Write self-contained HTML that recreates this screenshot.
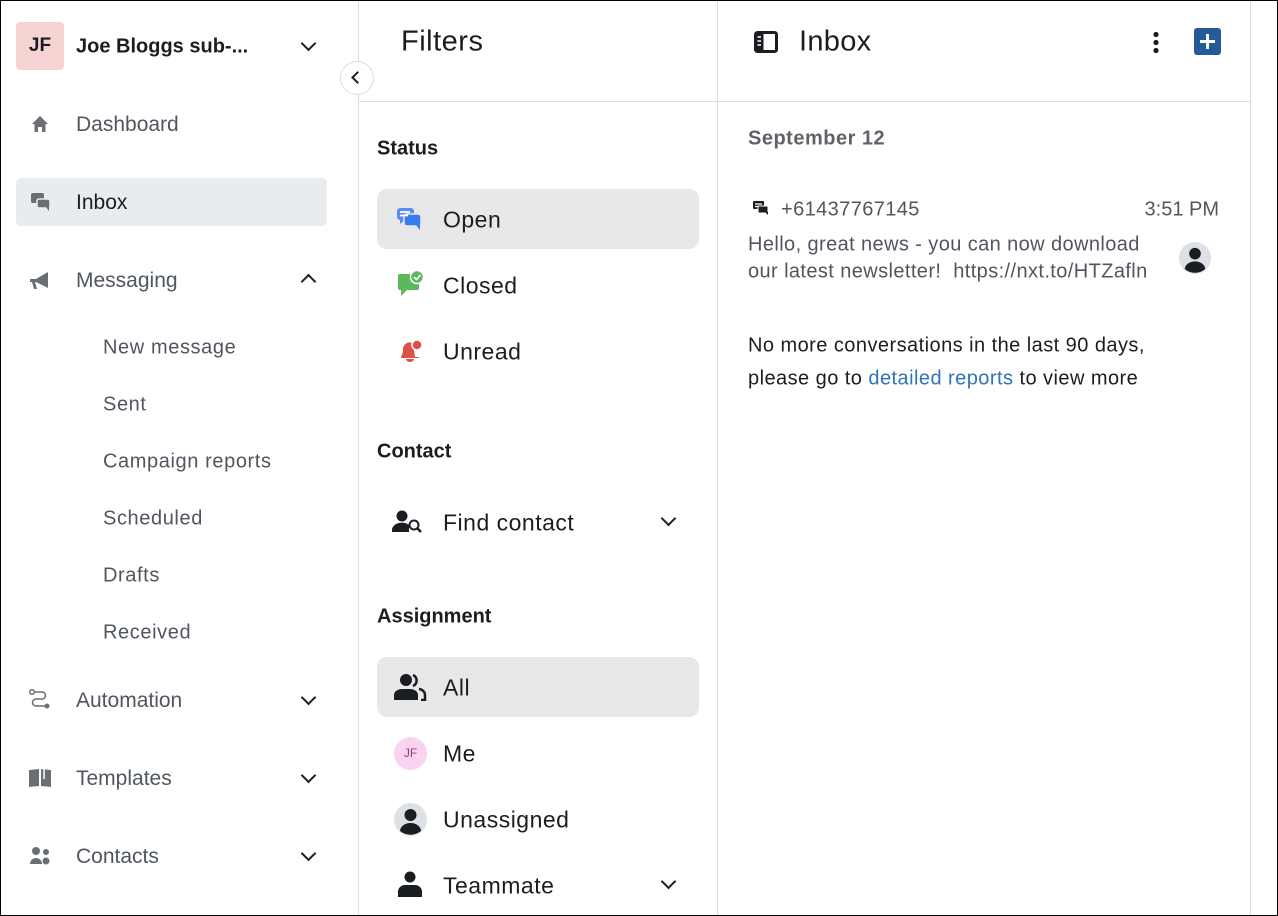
<!DOCTYPE html>
<html><head><meta charset="utf-8"><style>
*{margin:0;padding:0;box-sizing:border-box}
body{width:1278px;height:916px;overflow:hidden;background:#fff;font-family:"Liberation Sans",sans-serif;position:relative}
.frame{position:absolute;left:0;top:0;width:1278px;height:916px;border:1px solid #000;z-index:10;pointer-events:none}
.a{position:absolute;white-space:nowrap}
.vl{position:absolute;top:0;width:1px;height:916px;background:#dcdcdc}
.nav{font-size:21px;color:#505660;transform:translateY(-50%);margin-top:1px}
.sub{font-size:20px;letter-spacing:0.6px;color:#505660;transform:translateY(-50%);left:103px;margin-top:1px}
.f{font-size:23px;letter-spacing:0.5px;color:#1a1d21;transform:translateY(-50%);left:443px;margin-top:1px}
.h{font-size:20px;font-weight:bold;color:#1a1d21;transform:translateY(-50%);left:377px;margin-top:1px}
.ic{position:absolute}
.chev{position:absolute;width:11px;height:11px;border-right:2.5px solid #1a1d21;border-bottom:2.5px solid #1a1d21}
.m{font-size:20px;letter-spacing:0.4px;color:#505660;transform:translateY(-50%);margin-top:1px}
</style></head><body>
<div class="frame"></div>
<div class="vl" style="left:358px"></div>
<div class="vl" style="left:717px"></div>
<div class="vl" style="left:1250px"></div>
<div style="position:absolute;left:359px;top:101px;width:891px;height:1px;background:#dcdcdc"></div>

<!-- sidebar -->
<div class="a" style="left:16px;top:22px;width:48px;height:48px;background:#f6d3d3;border-radius:4px;font-size:19px;font-weight:bold;color:#1a1d21;text-align:center;line-height:48px">JF</div>
<div class="a" style="left:76px;top:47px;transform:translateY(-50%);font-size:20px;font-weight:bold;color:#1a1d21">Joe Bloggs sub-...</div>
<div class="chev" style="left:303px;top:38px;transform:rotate(45deg)"></div>
<div class="a" style="left:340px;top:61px;width:34px;height:34px;border:1px solid #dcdcdc;border-radius:50%;background:#fff;z-index:5"></div>
<div class="chev" style="left:353px;top:73px;width:9px;height:9px;transform:rotate(135deg);z-index:6"></div>

<svg class="ic" style="left:31px;top:115px" width="18" height="18" viewBox="0 0 18 18"><path d="M9 1 L17 9 H14.5 V17 H11 V12 H7 V17 H3.5 V9 H1 Z" fill="#6b6f75"/></svg>
<div class="a nav" style="left:76px;top:124px">Dashboard</div>
<div class="a" style="left:16px;top:178px;width:311px;height:48px;background:#e9ecef;border-radius:5px"></div>
<svg class="ic" style="left:30px;top:192px" width="22" height="20" viewBox="0 0 22 20"><rect x="1" y="1" width="13" height="10" rx="2" fill="#6b6f75"/><rect x="7" y="7" width="13" height="9" rx="2" fill="#6b6f75" stroke="#e9ecef" stroke-width="1.5"/><path d="M16 15 L19 19 L19 15Z" fill="#6b6f75"/></svg>
<div class="a nav" style="left:76px;top:202px;color:#1a1d21">Inbox</div>
<svg class="ic" style="left:28px;top:269px" width="24" height="24" viewBox="0 0 24 24"><path d="M2 10 H8 L20 3 V19 L8 13 H7 L9 20 H6 L4 13 H2Z" fill="#6b6f75"/></svg>
<div class="a nav" style="left:76px;top:280px">Messaging</div>
<div class="chev" style="left:303px;top:276px;transform:rotate(-135deg)"></div>
<div class="a sub" style="top:347px">New message</div>
<div class="a sub" style="top:404px">Sent</div>
<div class="a sub" style="top:461px">Campaign reports</div>
<div class="a sub" style="top:518px">Scheduled</div>
<div class="a sub" style="top:575px">Drafts</div>
<div class="a sub" style="top:632px">Received</div>
<svg class="ic" style="left:28px;top:689px" width="24" height="22" viewBox="0 0 24 22"><circle cx="4" cy="3" r="2.3" fill="none" stroke="#6b6f75" stroke-width="1.5"/><path d="M7 3 H14 A3.5 3.5 0 0 1 14 10 H8 A3.5 3.5 0 0 0 8 17 H17" fill="none" stroke="#6b6f75" stroke-width="1.5"/><circle cx="19" cy="17" r="2.5" fill="#6b6f75"/></svg>
<div class="a nav" style="left:76px;top:700px">Automation</div>
<div class="chev" style="left:303px;top:692px;transform:rotate(45deg)"></div>
<svg class="ic" style="left:28px;top:767px" width="24" height="22" viewBox="0 0 24 22"><path d="M1 3 L11 2 V19 L1 20Z M13 2 L23 3 V20 L13 19Z" fill="#6b6f75"/><path d="M16 1 V12" stroke="#fff" stroke-width="1.5"/></svg>
<div class="a nav" style="left:76px;top:778px">Templates</div>
<div class="chev" style="left:303px;top:770px;transform:rotate(45deg)"></div>
<svg class="ic" style="left:30px;top:846px" width="22" height="20" viewBox="0 0 22 20"><circle cx="6" cy="5" r="4" fill="#6b6f75"/><path d="M0 18 A6 6 0 0 1 12 18Z" fill="#6b6f75"/><circle cx="16" cy="6" r="3" fill="#6b6f75"/><circle cx="16" cy="15" r="3.5" fill="#6b6f75"/></svg>
<div class="a nav" style="left:76px;top:856px">Contacts</div>
<div class="chev" style="left:303px;top:848px;transform:rotate(45deg)"></div>

<!-- filters -->
<div class="a" style="left:401px;top:42px;transform:translateY(-50%);font-size:29px;letter-spacing:0.5px;color:#1a1d21">Filters</div>
<div class="a h" style="top:148px">Status</div>
<div class="a" style="left:377px;top:189px;width:322px;height:60px;background:#e8e8e8;border-radius:10px"></div>
<svg class="ic" style="left:396px;top:207px" width="28" height="26" viewBox="0 0 28 26"><rect x="1" y="1" width="17" height="12" rx="3" fill="#5b8def"/><path d="M4 12 L4 17 L9 13Z" fill="#5b8def"/><rect x="8" y="7" width="17" height="12" rx="3" fill="#3a7cf0" stroke="#e8e8e8" stroke-width="1.5"/><path d="M20 18 L24 23 V17Z" fill="#3a7cf0"/><path d="M4 5 H14 M4 8.5 H12" stroke="#fff" stroke-width="1.8"/></svg>
<div class="a f" style="top:219px">Open</div>
<svg class="ic" style="left:397px;top:270px" width="28" height="28" viewBox="0 0 28 28"><rect x="1" y="4" width="21" height="16" rx="2" fill="#5cb85c"/><path d="M4 19 V26 L11 19Z" fill="#5cb85c"/><circle cx="20" cy="7" r="6.5" fill="#5cb85c" stroke="#fff" stroke-width="1.5"/><path d="M17 7 L19.5 9.5 L23.5 5" stroke="#fff" stroke-width="1.6" fill="none"/></svg>
<div class="a f" style="top:285px">Closed</div>
<svg class="ic" style="left:398px;top:338px" width="26" height="26" viewBox="0 0 26 26"><path d="M3 19 Q5 16 5 11 A7 7 0 0 1 15 5 L17 19Z" fill="#e0504a"/><path d="M3 19 H21 V20 H3Z" fill="#e0504a"/><path d="M8 21 A4 3 0 0 0 16 21Z" fill="#e0504a"/><circle cx="19" cy="7" r="5" fill="#e0504a" stroke="#fff" stroke-width="1.5"/></svg>
<div class="a f" style="top:351px">Unread</div>

<div class="a h" style="top:451px">Contact</div>
<svg class="ic" style="left:392px;top:509px" width="32" height="26" viewBox="0 0 32 26"><circle cx="10" cy="7" r="5.5" fill="#1a1d21"/><path d="M0 23 A10 8 0 0 1 17 16 L17 23Z" fill="#1a1d21"/><circle cx="22" cy="16" r="4.5" fill="#fff" stroke="#1a1d21" stroke-width="2"/><path d="M25 19 L29 23" stroke="#1a1d21" stroke-width="2.5"/></svg>
<div class="a f" style="top:522px">Find contact</div>
<div class="chev" style="left:663px;top:513px;transform:rotate(45deg)"></div>

<div class="a h" style="top:616px">Assignment</div>
<div class="a" style="left:377px;top:657px;width:322px;height:60px;background:#e8e8e8;border-radius:10px"></div>
<svg class="ic" style="left:394px;top:673px" width="34" height="28" viewBox="0 0 34 28"><circle cx="12" cy="7" r="6" fill="#1a1d21"/><path d="M0 27 V22 A8 6 0 0 1 8 16 H16 A8 6 0 0 1 24 22 V27Z" fill="#1a1d21"/><path d="M19 2 A6 6 0 0 1 19 13" stroke="#1a1d21" stroke-width="2.5" fill="none"/><path d="M25 16 A7 6 0 0 1 31 22 V27 H27" stroke="#1a1d21" stroke-width="2.5" fill="none"/></svg>
<div class="a f" style="top:687px">All</div>
<div class="a" style="left:394px;top:737px;width:33px;height:33px;border-radius:50%;background:#f9d3f0;color:#8a3d7a;font-size:12px;text-align:center;line-height:33px">JF</div>
<div class="a f" style="top:753px">Me</div>
<svg class="ic" style="left:394px;top:803px" width="33" height="33" viewBox="0 0 33 33"><circle cx="16.5" cy="16.5" r="16.5" fill="#dde0e4"/><circle cx="16.5" cy="12" r="6" fill="#1a1d21"/><path d="M6 28 A10.5 8 0 0 1 27 28 A16.5 16.5 0 0 1 6 28Z" fill="#1a1d21"/></svg>
<div class="a f" style="top:819px">Unassigned</div>
<svg class="ic" style="left:397px;top:871px" width="26" height="26" viewBox="0 0 26 26"><circle cx="13" cy="6" r="5.5" fill="#1a1d21"/><path d="M1 26 V22 A7 7 0 0 1 8 14 H18 A7 7 0 0 1 25 22 V26Z" fill="#1a1d21"/></svg>
<div class="a f" style="top:885px">Teammate</div>
<div class="chev" style="left:663px;top:876px;transform:rotate(45deg)"></div>

<!-- inbox -->
<svg class="ic" style="left:754px;top:31px" width="24" height="22" viewBox="0 0 24 22"><rect x="1.5" y="1.5" width="21" height="19" rx="2" fill="none" stroke="#1a1d21" stroke-width="3"/><rect x="1.5" y="1.5" width="8" height="19" fill="#1a1d21"/><path d="M3.5 6 H7 M3.5 10 H7 M3.5 14 H7" stroke="#fff" stroke-width="1.6"/></svg>
<div class="a" style="left:799px;top:42px;transform:translateY(-50%);font-size:29px;letter-spacing:0.3px;color:#1a1d21">Inbox</div>
<svg class="ic" style="left:1152px;top:31px" width="8" height="23" viewBox="0 0 8 23"><circle cx="4" cy="3.5" r="2.6" fill="#1a1d21"/><circle cx="4" cy="11.5" r="2.6" fill="#1a1d21"/><circle cx="4" cy="19.5" r="2.6" fill="#1a1d21"/></svg>
<div class="a" style="left:1194px;top:28px;width:27px;height:27px;background:#245a98;border-radius:3px"></div>
<svg class="ic" style="left:1194px;top:28px" width="27" height="27" viewBox="0 0 27 27"><path d="M13.5 6 V21 M6 13.5 H21" stroke="#fff" stroke-width="3"/></svg>
<div class="a" style="left:748px;top:139px;transform:translateY(-50%);font-size:20px;letter-spacing:0.5px;font-weight:bold;color:#5f6368">September 12</div>
<svg class="ic" style="left:752px;top:200px" width="18" height="16" viewBox="0 0 18 16"><rect x="1" y="1" width="11" height="8" rx="1" fill="#1a1d21"/><path d="M3 4 H10 M3 6.5 H8" stroke="#fff" stroke-width="1.2"/><rect x="6" y="6" width="10" height="7" rx="1" fill="#1a1d21" stroke="#fff" stroke-width="1"/><path d="M13 12 L16 15 V12Z" fill="#1a1d21"/></svg>
<div class="a m" style="left:781px;top:209px">+61437767145</div>
<div class="a m" style="right:59px;top:209px;letter-spacing:0">3:51 PM</div>
<div class="a m" style="left:748px;top:244px">Hello, great news - you can now download</div>
<div class="a m" style="left:748px;top:271px">our latest newsletter!&nbsp; https://nxt.to/HTZafln</div>
<svg class="ic" style="left:1179px;top:242px" width="32" height="32" viewBox="0 0 33 33"><circle cx="16.5" cy="16.5" r="16.5" fill="#dde0e4"/><circle cx="16.5" cy="12" r="6" fill="#1a1d21"/><path d="M6 28 A10.5 8 0 0 1 27 28 A16.5 16.5 0 0 1 6 28Z" fill="#1a1d21"/></svg>
<div class="a" style="left:748px;top:346px;transform:translateY(-50%);font-size:20px;letter-spacing:0.45px;color:#1a1d21">No more conversations in the last 90 days,</div>
<div class="a" style="left:748px;top:379px;transform:translateY(-50%);font-size:20px;letter-spacing:0.45px;color:#1a1d21">please go to <span style="color:#2f75b5">detailed reports</span> to view more</div>
</body></html>
